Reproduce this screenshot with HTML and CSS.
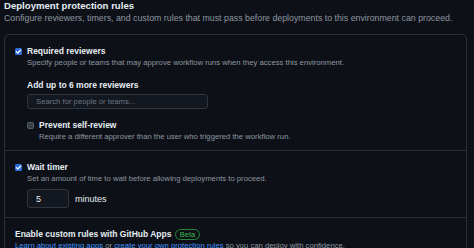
FILE: index.html
```html
<!DOCTYPE html>
<html lang="en">
<head>
    <meta charset="UTF-8">
    <title>Deployment protection rules</title>
    <link rel="stylesheet" href="styles.css">
</head>
<body>
    <div class="page">
        <h2 class="title">Deployment protection rules</h2>
        <p class="subtitle">Configure reviewers, timers, and custom rules that must pass before deployments to this environment can proceed.</p>

        <div class="rules-box">
            <!-- Required reviewers -->
            <div class="rule rule-reviewers">
                <div class="check-row">
                    <span class="checkbox checked">
                        <svg viewBox="0 0 8 8" width="7" height="7"><path d="M1.6 4.1 3.2 5.7 6.4 2.3" fill="none" stroke="#fff" stroke-width="1.3" stroke-linecap="round" stroke-linejoin="round"/></svg>
                    </span>
                    <div class="check-text">
                        <div class="label">Required reviewers</div>
                        <div class="note">Specify people or teams that may approve workflow runs when they access this environment.</div>
                    </div>
                </div>

                <div class="field">
                    <div class="label">Add up to 6 more reviewers</div>
                    <div class="text-input search-input">Search for people or teams...</div>

                    <div class="check-row sub-check">
                        <span class="checkbox off"></span>
                        <div class="check-text">
                            <div class="label">Prevent self-review</div>
                            <div class="note">Require a different approver than the user who triggered the workflow run.</div>
                        </div>
                    </div>
                </div>
            </div>

            <!-- Wait timer -->
            <div class="rule rule-timer">
                <div class="check-row">
                    <span class="checkbox checked">
                        <svg viewBox="0 0 8 8" width="7" height="7"><path d="M1.6 4.1 3.2 5.7 6.4 2.3" fill="none" stroke="#fff" stroke-width="1.3" stroke-linecap="round" stroke-linejoin="round"/></svg>
                    </span>
                    <div class="check-text">
                        <div class="label">Wait timer</div>
                        <div class="note">Set an amount of time to wait before allowing deployments to proceed.</div>
                    </div>
                </div>
                <div class="field timer-field">
                    <div class="text-input minutes-input">5</div>
                    <span class="unit">minutes</span>
                </div>
            </div>

            <!-- Custom rules -->
            <div class="rule rule-apps">
                <div class="label">Enable custom rules with GitHub Apps <span class="beta">Beta</span></div>
                <div class="note"><a href="#">Learn about existing apps</a> or <a href="#">create your own protection rules</a> so you can deploy with confidence.</div>
            </div>
        </div>
    </div>
</body>
</html>
```

FILE: styles.css
```css
body {
    margin: 0;
    background-color: #0d1117;
    color: #e6edf3;
    font-family: 'Liberation Sans', Arial, sans-serif;
    overflow: hidden;
}

.page {
    padding: 0 4px;
    width: 463px;
}

.title {
    margin: 0;
    font-size: 9.6px;
    line-height: 12px;
    font-weight: 700;
}

.subtitle {
    margin: 0;
    padding-top: 1px;
    font-size: 8.8px;
    line-height: 11px;
    color: #8d96a0;
}

.rules-box {
    margin-top: 10px;
    border: 1px solid #2a3038;
    border-radius: 5px;
}

.rule {
    padding: 10px 10px 8px;
    border-bottom: 1px solid #2a3038;
}

.rule-timer {
    padding-bottom: 9px;
}

.rule-apps {
    padding-top: 10px;
    border-bottom: none;
}

.label {
    font-size: 8.5px;
    line-height: 12px;
    font-weight: 700;
}

.note {
    font-size: 7.7px;
    line-height: 11px;
    color: #8d96a0;
}

.note a {
    color: #4493f8;
    text-decoration: none;
}

.check-row {
    display: flex;
    gap: 5px;
}

.checkbox {
    flex: none;
    width: 7px;
    height: 7px;
    margin-top: 2.5px;
    border-radius: 1.5px;
    box-sizing: border-box;
    display: flex;
    align-items: center;
    justify-content: center;
}

.checkbox.checked {
    background-color: #2f6fdc;
}

.checkbox.off {
    background-color: #3a4048;
    border: 1px solid #555c65;
}

.field {
    padding-left: 12px;
}

.rule-reviewers .field {
    margin-top: 11px;
}

.text-input {
    box-sizing: border-box;
    border: 1px solid #30363d;
    border-radius: 3px;
    background-color: #121720;
    font-size: 7.7px;
    display: flex;
    align-items: center;
}

.search-input {
    margin-top: 3px;
    width: 181px;
    height: 15px;
    padding-left: 8px;
    color: #6e7681;
}

.sub-check {
    margin-top: 10px;
}

.timer-field {
    margin-top: 5px;
    display: flex;
    align-items: center;
    gap: 6px;
}

.minutes-input {
    width: 42px;
    height: 19px;
    padding-left: 8px;
    color: #e6edf3;
    font-size: 9px;
}

.unit {
    font-size: 9px;
    color: #e6edf3;
}

.beta {
    display: inline-block;
    margin-left: 1px;
    padding: 0 4px;
    border: 1px solid #238636;
    border-radius: 6px;
    color: #3fb950;
    font-size: 7.5px;
    line-height: 9px;
    font-weight: 500;
    vertical-align: 0;
}
```
